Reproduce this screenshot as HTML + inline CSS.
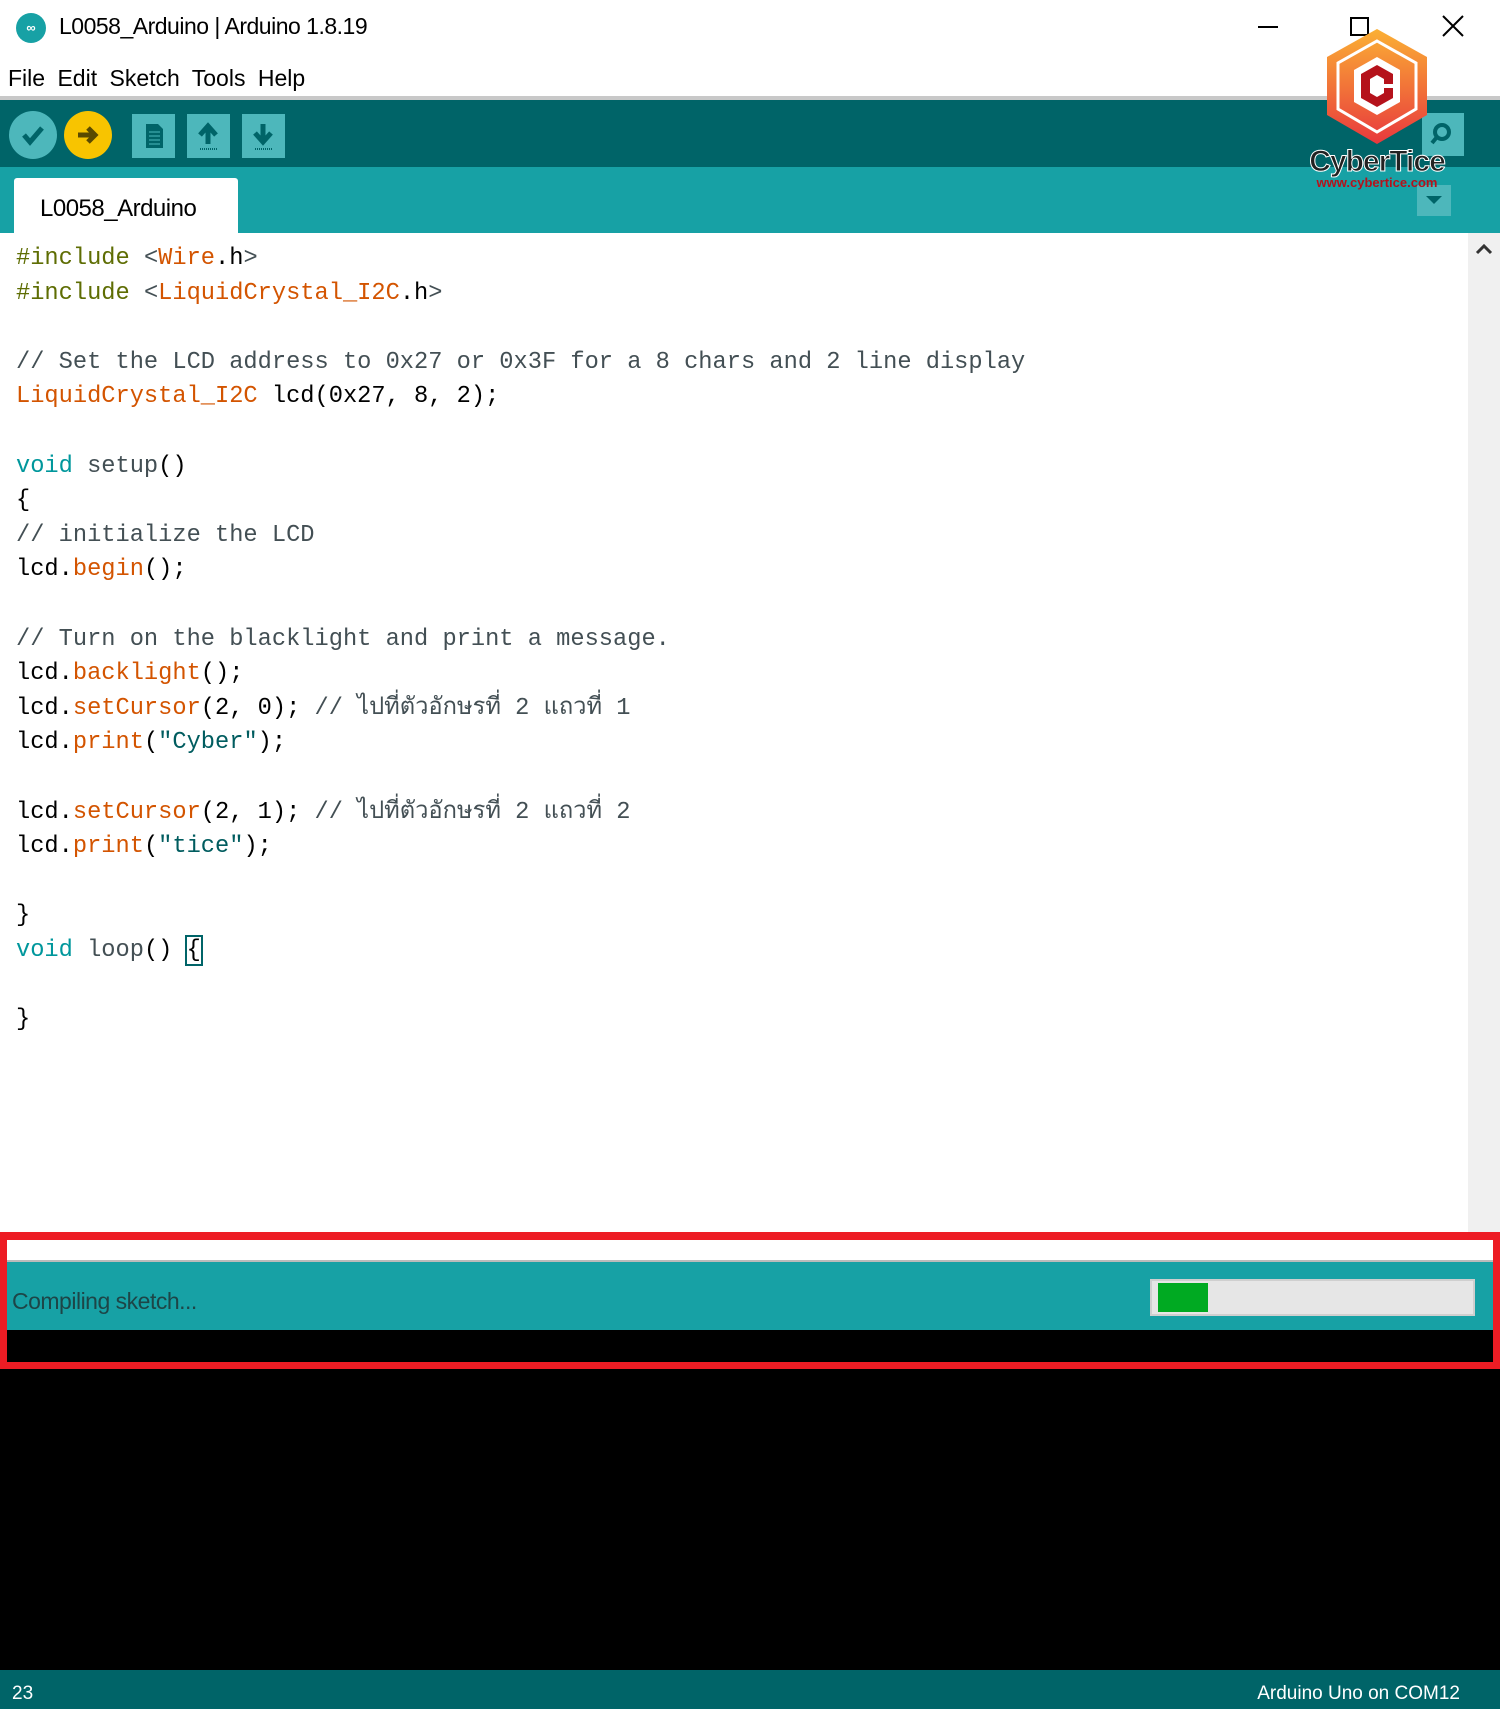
<!DOCTYPE html>
<html><head><meta charset="utf-8"><style>
*{margin:0;padding:0;box-sizing:border-box}
body{width:1500px;height:1709px;position:relative;background:#fff;overflow:hidden;font-family:"Liberation Sans",sans-serif}
.abs{position:absolute}
.code{position:absolute;left:16px;top:242px;font-family:"Liberation Mono","DejaVu Sans Mono",monospace;font-size:23.7px;line-height:34.6px;color:#000;white-space:pre}
.pp{color:#5e6d03}.or{color:#d35400}.cm{color:#434f54}.kw{color:#00979c}.st{color:#005c5f}
.sq{position:absolute;top:114px;width:43px;height:44px;background:#4db7bb}
</style></head><body>
<div class="abs" style="left:16px;top:13px;width:30px;height:30px;border-radius:50%;background:#17a1a5;color:#fff;font-size:13px;font-weight:bold;text-align:center;line-height:30px">∞</div>
<div class="abs" style="left:59px;top:13px;font-size:23px;color:#000;letter-spacing:-0.5px">L0058_Arduino | Arduino 1.8.19</div>
<div class="abs" style="left:1258px;top:26px;width:20px;height:2px;background:#000"></div>
<div class="abs" style="left:1350px;top:17px;width:19px;height:19px;border:2px solid #000"></div>
<svg class="abs" style="left:1442px;top:15px" width="22" height="22"><path d="M1 1L21 21M21 1L1 21" stroke="#000" stroke-width="2"/></svg>
<div class="abs" style="left:8px;top:65px;font-size:23px;color:#000;word-spacing:6px">File Edit Sketch Tools Help</div>
<div class="abs" style="left:0;top:96px;width:1500px;height:4px;background:#c8c8c8"></div>
<div class="abs" style="left:0;top:100px;width:1500px;height:67px;background:#006468"></div>
<div class="abs" style="left:9px;top:111px;width:48px;height:48px;border-radius:50%;background:#4db7bb"></div>
<svg class="abs" style="left:9px;top:111px" width="48" height="48"><path d="M15 24L21 31L33 17" stroke="#006468" stroke-width="5" fill="none"/></svg>
<div class="abs" style="left:64px;top:111px;width:48px;height:48px;border-radius:50%;background:#f8c400"></div>
<svg class="abs" style="left:64px;top:111px" width="48" height="48"><path d="M14 24H30M24 17L31 24L24 31" stroke="#5a4a00" stroke-width="5" fill="none"/></svg>
<div class="sq" style="left:132px"></div><div class="sq" style="left:187px"></div><div class="sq" style="left:242px"></div>
<svg class="abs" style="left:132px;top:114px" width="43" height="44"><path d="M14 10H26L31 15V34H14Z" fill="#006468"/><path d="M17 18H28M17 22H28M17 26H28M17 30H28" stroke="#4db7bb" stroke-width="1"/></svg>
<svg class="abs" style="left:187px;top:114px" width="43" height="44"><path d="M21 30V14M13 21L21 12L29 21" stroke="#006468" stroke-width="5" fill="none"/><path d="M13 35H30" stroke="#006468" stroke-width="2" stroke-dasharray="1 1"/></svg>
<svg class="abs" style="left:242px;top:114px" width="43" height="44"><path d="M21 10V26M13 19L21 28L29 19" stroke="#006468" stroke-width="5" fill="none"/><path d="M13 35H30" stroke="#006468" stroke-width="2" stroke-dasharray="1 1"/></svg>
<div class="abs" style="left:1422px;top:113px;width:42px;height:43px;background:#4db7bb"></div>
<svg class="abs" style="left:1422px;top:113px" width="42" height="43"><circle cx="20" cy="19" r="7" stroke="#006468" stroke-width="4" fill="none"/><path d="M15 24L10 30" stroke="#006468" stroke-width="4"/></svg>
<div class="abs" style="left:0;top:167px;width:1500px;height:66px;background:#17a1a5"></div>
<div class="abs" style="left:14px;top:178px;width:224px;height:56px;background:#fff;border-radius:3px 3px 0 0"></div>
<div class="abs" style="left:40px;top:195px;font-size:24px;color:#000;letter-spacing:-0.5px">L0058_Arduino</div>
<div class="abs" style="left:1417px;top:185px;width:34px;height:31px;background:#4db7bb"></div>
<svg class="abs" style="left:1417px;top:185px" width="34" height="31"><path d="M9 11H25L17 19Z" fill="#006468"/></svg>
<div class="abs" style="left:1468px;top:233px;width:32px;height:999px;background:#f0f0f0"></div>
<svg class="abs" style="left:1474px;top:242px" width="20" height="14"><path d="M3 11L10 4L17 11" stroke="#333" stroke-width="3" fill="none"/></svg>
<div class="code"><span class="pp">#include</span> <span class="cm">&lt;</span><span class="or">Wire</span>.h<span class="cm">&gt;</span>
<span class="pp">#include</span> <span class="cm">&lt;</span><span class="or">LiquidCrystal_I2C</span>.h<span class="cm">&gt;</span>

<span class="cm">// Set the LCD address to 0x27 or 0x3F for a 8 chars and 2 line display</span>
<span class="or">LiquidCrystal_I2C</span> lcd(0x27, 8, 2);

<span class="kw">void</span> <span class="cm">setup</span>()
{
<span class="cm">// initialize the LCD</span>
lcd.<span class="or">begin</span>();

<span class="cm">// Turn on the blacklight and print a message.</span>
lcd.<span class="or">backlight</span>();
lcd.<span class="or">setCursor</span>(2, 0); <span class="cm">// ไปที่ตัวอักษรที่ 2 แถวที่ 1</span>
lcd.<span class="or">print</span>(<span class="st">"Cyber"</span>);

lcd.<span class="or">setCursor</span>(2, 1); <span class="cm">// ไปที่ตัวอักษรที่ 2 แถวที่ 2</span>
lcd.<span class="or">print</span>(<span class="st">"tice"</span>);

}
<span class="kw">void</span> <span class="cm">loop</span>() <span style="outline:2px solid #006468">{</span>

}</div>
<div class="abs" style="left:0;top:1232px;width:1500px;height:137px;background:#ed1c24"></div>
<div class="abs" style="left:7px;top:1240px;width:1486px;height:22px;background:#fff;border-bottom:2px solid #bbb"></div>
<div class="abs" style="left:7px;top:1262px;width:1486px;height:68px;background:#17a1a5"></div>
<div class="abs" style="left:12px;top:1288px;font-size:23px;color:#1d4547;letter-spacing:-0.5px">Compiling sketch...</div>
<div class="abs" style="left:1150px;top:1279px;width:325px;height:37px;background:#e6e6e6;border:2px solid #cfcfcf"></div>
<div class="abs" style="left:1158px;top:1283px;width:50px;height:29px;background:#00aa22"></div>
<div class="abs" style="left:7px;top:1330px;width:1486px;height:32px;background:#000"></div>
<div class="abs" style="left:0;top:1369px;width:1500px;height:301px;background:#000"></div>
<div class="abs" style="left:0;top:1670px;width:1500px;height:39px;background:#006468"></div>
<div class="abs" style="left:12px;top:1683px;font-size:19px;color:#fff">23</div>
<div class="abs" style="right:40px;top:1683px;font-size:19px;color:#fff">Arduino Uno on COM12</div>
<svg class="abs" style="left:1300px;top:27px" width="155" height="165">
<defs><linearGradient id="g" x1="0" y1="0" x2="0" y2="1"><stop offset="0" stop-color="#fbb034"/><stop offset="1" stop-color="#e8383d"/></linearGradient></defs>
<path d="M77 2L127 30V88L77 117L27 88V30Z" fill="url(#g)"/>
<path d="M77 14L116 36V82L77 105L38 82V36Z" fill="none" stroke="#fff" stroke-width="3"/>
<path d="M77 30L100 43V75L77 88L54 75V43Z" fill="#fff"/>
<path d="M77 38L93 47V57H84V52L77 48L70 52V66L77 70L84 66V61H93V71L77 80L61 71V47Z" fill="#b5121b"/>
<text x="77" y="144" text-anchor="middle" font-family="Liberation Sans,sans-serif" font-size="30" font-weight="bold" fill="#222" stroke="#fff" stroke-width="1" letter-spacing="-1">CyberTice</text>
<text x="77" y="160" text-anchor="middle" font-family="Liberation Sans,sans-serif" font-size="13" font-weight="bold" fill="#b5121b">www.cybertice.com</text>
</svg>
</body></html>
